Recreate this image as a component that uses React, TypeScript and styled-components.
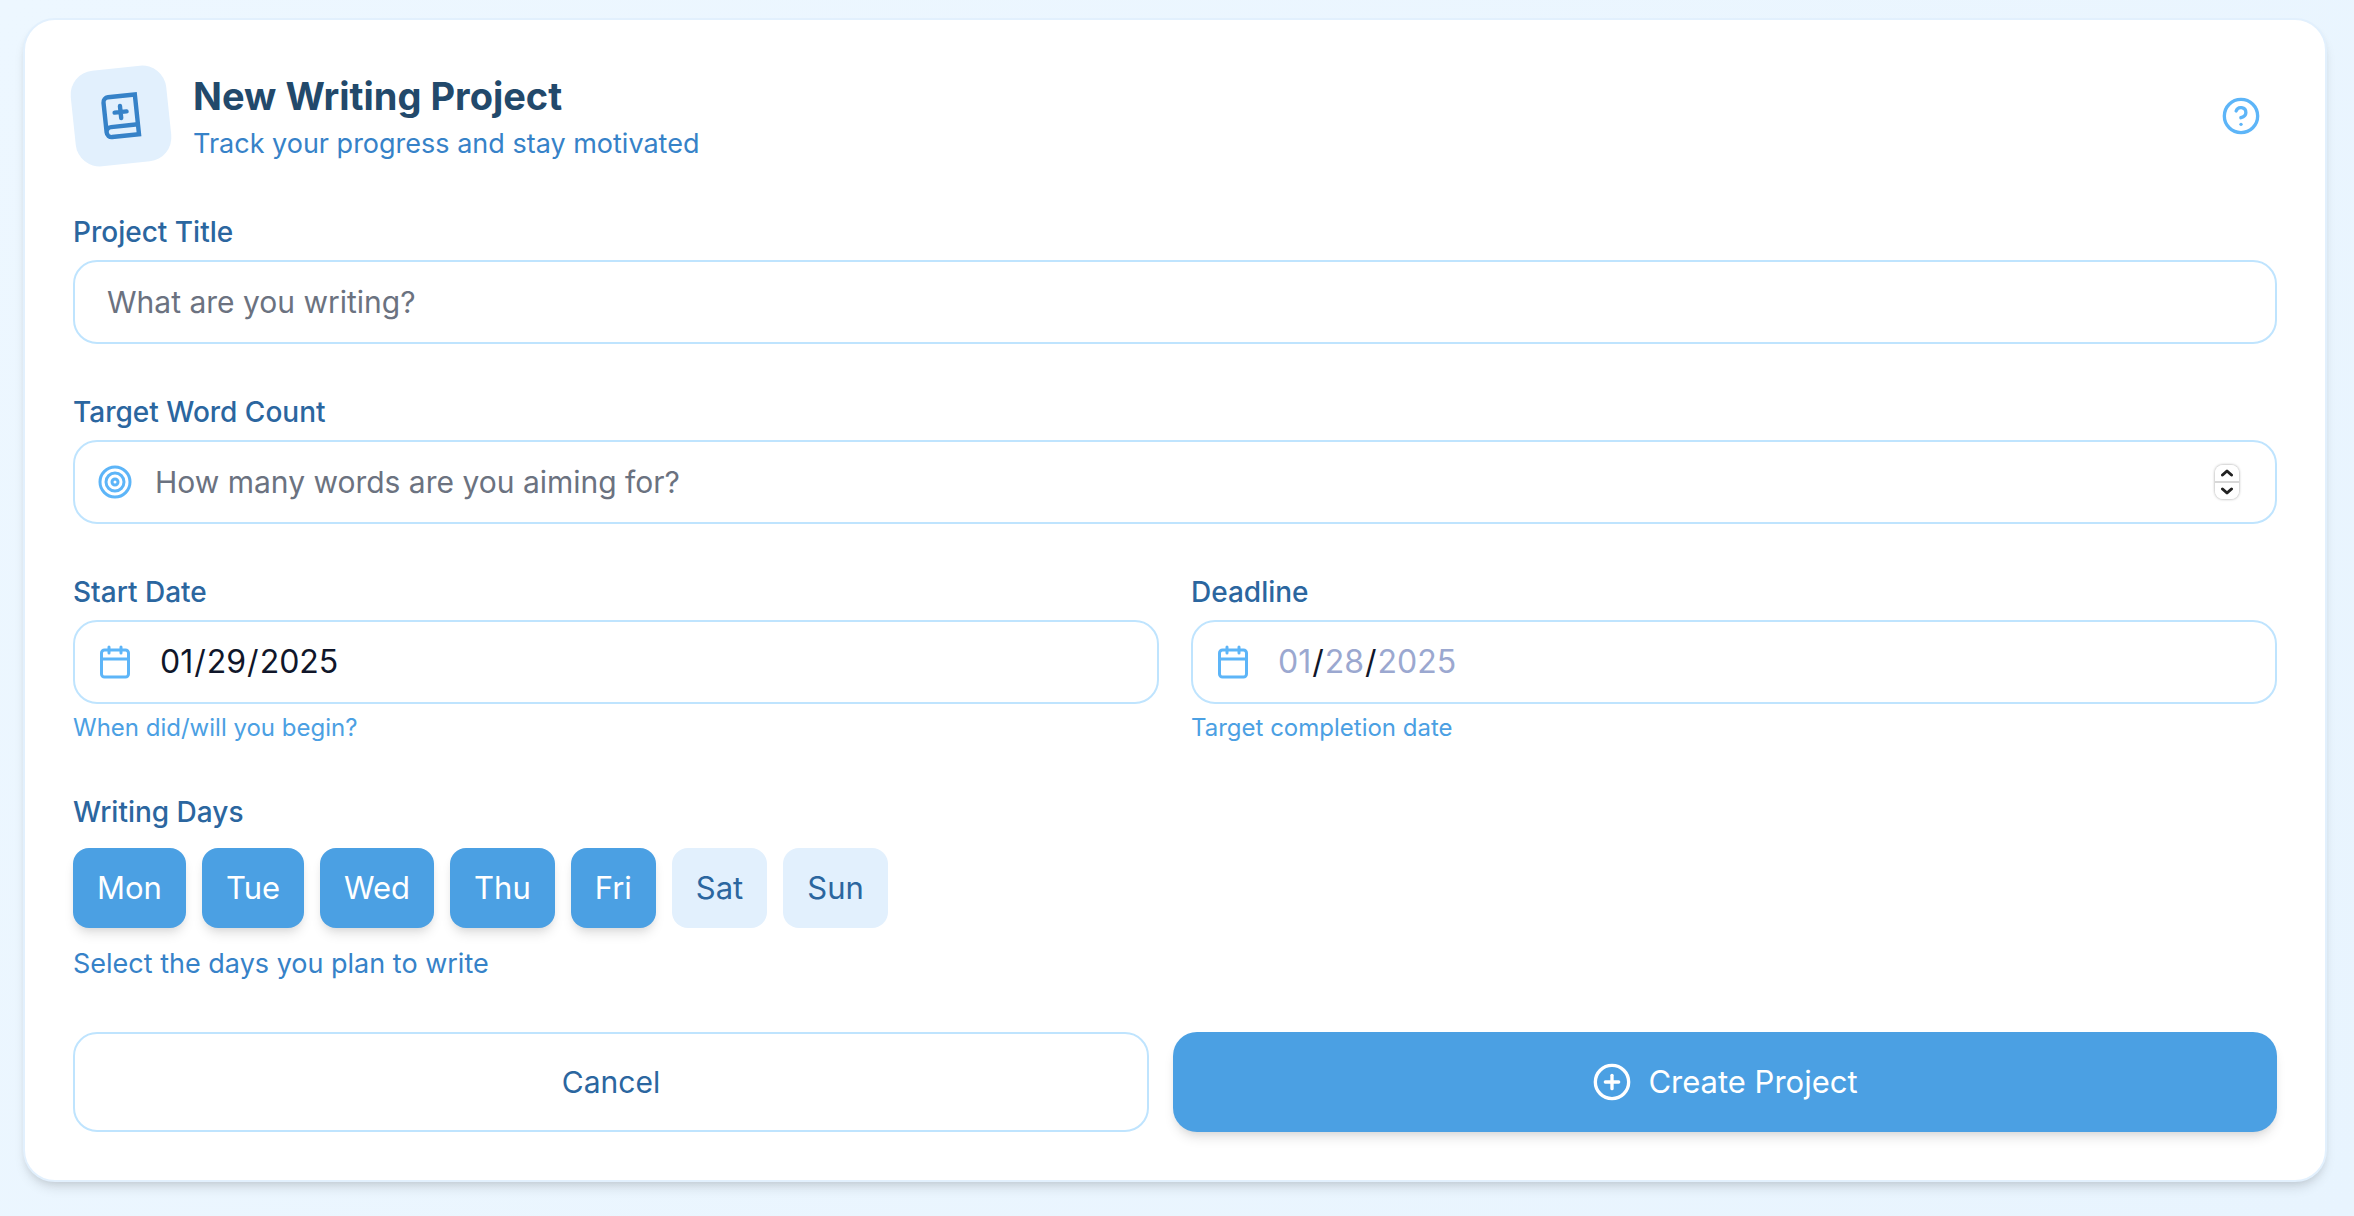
import React, { useId, useState } from "react";
import styled, { createGlobalStyle, css } from "styled-components";
import { Calendar, CircleHelp, CirclePlus, Target } from "lucide-react";

const GlobalStyle = createGlobalStyle`
  *, *::before, *::after { box-sizing: border-box; }
  body {
    margin: 0;
    min-height: 100vh;
    padding: 18px 27px 34px 23px;
    font-family: Inter, "Liberation Sans", sans-serif;
    font-size: 30px;
    line-height: 48px;
    color: #1a202c;
    background: linear-gradient(135deg, #edf7ff, #e8f4fe);
  }
  button, input { font: inherit; color: inherit; margin: 0; }
`;

const Card = styled.main`
  padding: 48px;
  background: #fff;
  border: 2px solid #e2f0fd;
  border-radius: 32px;
  box-shadow: 0 8px 12px -2px rgba(0, 0, 0, 0.1), 0 4px 8px -4px rgba(0, 0, 0, 0.12);
`;

const Form = styled.form`
  display: flex;
  flex-direction: column;
  gap: 48px;
`;

const Header = styled.header`
  display: flex;
  align-items: center;
  gap: 24px;
`;

const IconTile = styled.div`
  display: flex;
  padding: 24px;
  border-radius: 24px;
  background: #e2f0fd;
  color: #3682c8;
  transform: rotate(-6deg);
`;

const Heading = styled.div`
  flex: 1;
`;

const Title = styled.h1`
  margin: 0;
  font-size: 38px;
  line-height: 56px;
  font-weight: 700;
  color: #22496b;
`;

const Note = styled.p`
  margin: 0;
  font-size: 27px;
  line-height: 40px;
  color: #3682c8;
`;

const IconButton = styled.button`
  display: flex;
  padding: 16px;
  border: 0;
  border-radius: 50%;
  background: none;
  color: #5db5f8;
`;

const Field = styled.div`
  display: flex;
  flex-direction: column;
  gap: 8px;
`;

const labelStyle = css`
  font-size: 28px;
  line-height: 40px;
  font-weight: 500;
  color: #2b669f;
`;

const Label = styled.label`
  ${labelStyle}
`;

const Hint = styled.p`
  margin: 0;
  font-size: 24px;
  line-height: 32px;
  color: #4ba0e3;
`;

const InputBox = styled.div<{ $icon?: boolean }>`
  display: flex;
  align-items: center;
  gap: 22px;
  padding: 16px 32px 16px ${(p) => (p.$icon ? "22px" : "32px")};
  border: 2px solid #bfe4fe;
  border-radius: 24px;
  background: #fff;
  color: #5db5f8;
`;

const TextInput = styled.input`
  flex: 1;
  min-width: 0;
  height: 48px;
  padding: 0;
  border: 0;
  outline: 0;
  background: none;
  color: #10162a;
  appearance: textfield;
  &::placeholder { color: #6b7280; opacity: 1; }
  &::-webkit-inner-spin-button { display: none; }
`;

const DateInput = styled(TextInput)<{ $muted?: boolean }>`
  font-size: 32px;
  &::-webkit-calendar-picker-indicator { display: none; }
  &::-webkit-datetime-edit { padding: 0 4px; }
  &::-webkit-datetime-edit-month-field,
  &::-webkit-datetime-edit-day-field,
  &::-webkit-datetime-edit-year-field {
    color: ${(p) => (p.$muted ? "#9ba8d0" : "#10162a")};
  }
`;

const Stepper = styled.div`
  display: flex;
  flex-direction: column;
  width: 24px;
  margin-right: 4px;
  border-radius: 8px;
  box-shadow: 0 0 3px rgba(0, 0, 0, 0.4);
  overflow: hidden;
`;

const Step = styled.button`
  display: flex;
  align-items: center;
  justify-content: center;
  height: 16px;
  padding: 0;
  border: 0;
  background: #fff;
  color: #222;
  & + & {
    height: 18px;
    border-top: 2px solid #d8d8d8;
  }
`;

const Columns = styled.div`
  display: grid;
  grid-template-columns: 1fr 1fr;
  gap: 32px;
`;

const DayGroup = styled.fieldset`
  display: flex;
  flex-direction: column;
  gap: 16px;
  min-width: 0;
  margin: 0;
  padding: 0;
  border: 0;
`;

const Legend = styled.legend`
  ${labelStyle}
  padding: 0;
  margin-bottom: 16px;
`;

const DayRow = styled.div`
  display: flex;
  flex-wrap: wrap;
  gap: 16px;
`;

const DayButton = styled.button<{ $on: boolean }>`
  padding: 16px 24px;
  border: 0;
  border-radius: 16px;
  font-size: 31px;
  background: ${(p) => (p.$on ? "#4ba0e3" : "#e2f0fd")};
  color: ${(p) => (p.$on ? "#fff" : "#2b669f")};
  box-shadow: ${(p) => (p.$on ? "0 8px 12px -2px rgba(0, 0, 0, 0.1), 0 4px 8px -4px rgba(0, 0, 0, 0.1)" : "none")};
`;

const Actions = styled.div`
  display: flex;
  gap: 24px;
`;

const CancelButton = styled.button`
  flex: 1 1 0;
  padding: 24px 32px;
  border: 2px solid #bfe4fe;
  border-radius: 24px;
  background: #fff;
  color: #2b669f;
`;

const CreateButton = styled.button`
  display: flex;
  flex: 1 1 0;
  align-items: center;
  justify-content: center;
  gap: 16px;
  padding: 24px 48px;
  border: 0;
  border-radius: 24px;
  font-size: 31px;
  background: #4ba0e3;
  color: #fff;
  box-shadow: 0 8px 12px -2px rgba(0, 0, 0, 0.1), 0 4px 8px -4px rgba(0, 0, 0, 0.1);
`;

const BookIcon = () => (
  <svg width="48" height="48" viewBox="0 0 24 24" fill="none" stroke="currentColor" strokeWidth="2.2" strokeLinecap="round" aria-hidden="true">
    <path d="M4 19.5v-15A2.5 2.5 0 0 1 6.5 2H20v20H6.5a2.5 2.5 0 0 1 0-5H20" />
    <path d="M9 10h6M12 7v6" />
  </svg>
);

const Chevron = ({ down }: { down?: boolean }) => (
  <svg width="14" height="8" viewBox="0 0 14 8" fill="none" stroke="currentColor" strokeWidth="3" strokeLinecap="round" strokeLinejoin="round" aria-hidden="true">
    <path d={down ? "M2.5 2 7 6l4.5-4" : "M2.5 6 7 2l4.5 4"} />
  </svg>
);

const DAYS = ["Mon", "Tue", "Wed", "Thu", "Fri", "Sat", "Sun"];

export default function App() {
  const id = useId();
  const [words, setWords] = useState("");
  const [start, setStart] = useState("2025-01-29");
  const [deadline, setDeadline] = useState("");
  const [days, setDays] = useState<string[]>(DAYS.slice(0, 5));

  const step = (n: number) => setWords(String(Math.max(0, Number(words) + n)));
  const toggle = (day: string) =>
    setDays(days.includes(day) ? days.filter((d) => d !== day) : [...days, day]);

  return (
    <>
      <GlobalStyle />
      <Card>
        <Form onSubmit={(e) => e.preventDefault()}>
          <Header>
            <IconTile>
              <BookIcon />
            </IconTile>
            <Heading>
              <Title>New Writing Project</Title>
              <Note>Track your progress and stay motivated</Note>
            </Heading>
            <IconButton type="button" aria-label="Help">
              <CircleHelp size={40} />
            </IconButton>
          </Header>

          <Field>
            <Label htmlFor={id + "title"}>Project Title</Label>
            <InputBox>
              <TextInput id={id + "title"} type="text" placeholder="What are you writing?" />
            </InputBox>
          </Field>

          <Field>
            <Label htmlFor={id + "words"}>Target Word Count</Label>
            <InputBox $icon>
              <Target size={36} />
              <TextInput
                id={id + "words"}
                type="number"
                placeholder="How many words are you aiming for?"
                value={words}
                onChange={(e) => setWords(e.target.value)}
              />
              <Stepper>
                <Step type="button" aria-label="Increase" onClick={() => step(1)}><Chevron /></Step>
                <Step type="button" aria-label="Decrease" onClick={() => step(-1)}><Chevron down /></Step>
              </Stepper>
            </InputBox>
          </Field>

          <Columns>
            <Field>
              <Label htmlFor={id + "start"}>Start Date</Label>
              <InputBox $icon>
                <Calendar size={36} />
                <DateInput id={id + "start"} type="date" value={start} onChange={(e) => setStart(e.target.value)} />
              </InputBox>
              <Hint>When did/will you begin?</Hint>
            </Field>
            <Field>
              <Label htmlFor={id + "deadline"}>Deadline</Label>
              <InputBox $icon>
                <Calendar size={36} />
                <DateInput
                  id={id + "deadline"}
                  type="date"
                  $muted={!deadline}
                  value={deadline || "2025-01-28"}
                  onChange={(e) => setDeadline(e.target.value)}
                />
              </InputBox>
              <Hint>Target completion date</Hint>
            </Field>
          </Columns>

          <DayGroup>
            <Legend>Writing Days</Legend>
            <DayRow>
              {DAYS.map((day) => (
                <DayButton key={day} type="button" $on={days.includes(day)} aria-pressed={days.includes(day)} onClick={() => toggle(day)}>
                  {day}
                </DayButton>
              ))}
            </DayRow>
            <Note>Select the days you plan to write</Note>
          </DayGroup>

          <Actions>
            <CancelButton type="button">Cancel</CancelButton>
            <CreateButton type="submit">
              <CirclePlus size={40} />
              Create Project
            </CreateButton>
          </Actions>
        </Form>
      </Card>
    </>
  );
}
